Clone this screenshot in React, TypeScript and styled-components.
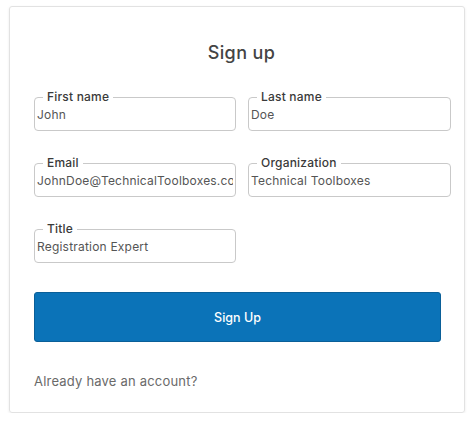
import React from 'react';
import styled, { createGlobalStyle } from 'styled-components';

const GlobalStyle = createGlobalStyle`
    body {
        margin: 0;
        background: #ffffff;
        font-family: Inter, 'Open Sans', 'Liberation Sans', sans-serif;
    }
`;

const Card = styled.div`
    box-sizing: border-box;
    margin: 6px 0 0 9px;
    width: 456px;
    height: 407px;
    padding: 34px 15px 0 24px;
    border: 1px solid #e2e2e2;
    border-radius: 3px;
    box-shadow: 0 1px 3px rgba(0, 0, 0, 0.08);
    display: flex;
    flex-direction: column;
`;

const Heading = styled.h1`
    margin: 0 0 24px;
    text-align: center;
    font-size: 18px;
    line-height: 24px;
    font-weight: 500;
    color: #444444;
    letter-spacing: 0.4px;
`;

const Grid = styled.div`
    display: grid;
    grid-template-columns: 202px 203px;
    column-gap: 12px;
    row-gap: 24px;
`;

const Field = styled.fieldset`
    margin: 0;
    padding: 0 2px;
    height: 42px;
    box-sizing: border-box;
    border: 1px solid #c9c9c9;
    border-radius: 4px;
    min-width: 0;
    display: flex;
    align-items: center;
`;

const Legend = styled.legend`
    margin-left: 6px;
    padding: 0 4px;
    font-size: 12px;
    line-height: 16px;
    font-weight: 500;
    letter-spacing: 0.2px;
    color: #3a3a3a;
`;

const Input = styled.input`
    width: 100%;
    border: none;
    outline: none;
    padding: 0;
    margin-top: -6px;
    font-family: inherit;
    font-size: 12px;
    letter-spacing: 0.2px;
    color: #555555;
    background: transparent;
`;

const SubmitButton = styled.button`
    margin: 29px 8px 0 0;
    height: 50px;
    border: 1px solid #0a5f98;
    border-radius: 3px;
    background: #0b73b8;
    color: #ffffff;
    font-family: inherit;
    font-size: 12.5px;
    font-weight: 500;
    cursor: pointer;
`;

const Footer = styled.p`
    margin: 31px 0 0;
    font-size: 13px;
    letter-spacing: 0.2px;
    color: #6a6a6a;
`;

type FieldProps = { label: string; value: string };

const TextField = ({ label, value }: FieldProps) => (
    <Field>
        <Legend>{label}</Legend>
        <Input defaultValue={value} />
    </Field>
);

const App = () => (
    <>
        <GlobalStyle />
        <Card>
            <Heading>Sign up</Heading>
            <Grid>
                <TextField label="First name" value="John" />
                <TextField label="Last name" value="Doe" />
                <TextField label="Email" value="JohnDoe@TechnicalToolboxes.com" />
                <TextField label="Organization" value="Technical Toolboxes" />
                <TextField label="Title" value="Registration Expert" />
            </Grid>
            <SubmitButton>Sign Up</SubmitButton>
            <Footer>Already have an account?</Footer>
        </Card>
    </>
);

export default App;
